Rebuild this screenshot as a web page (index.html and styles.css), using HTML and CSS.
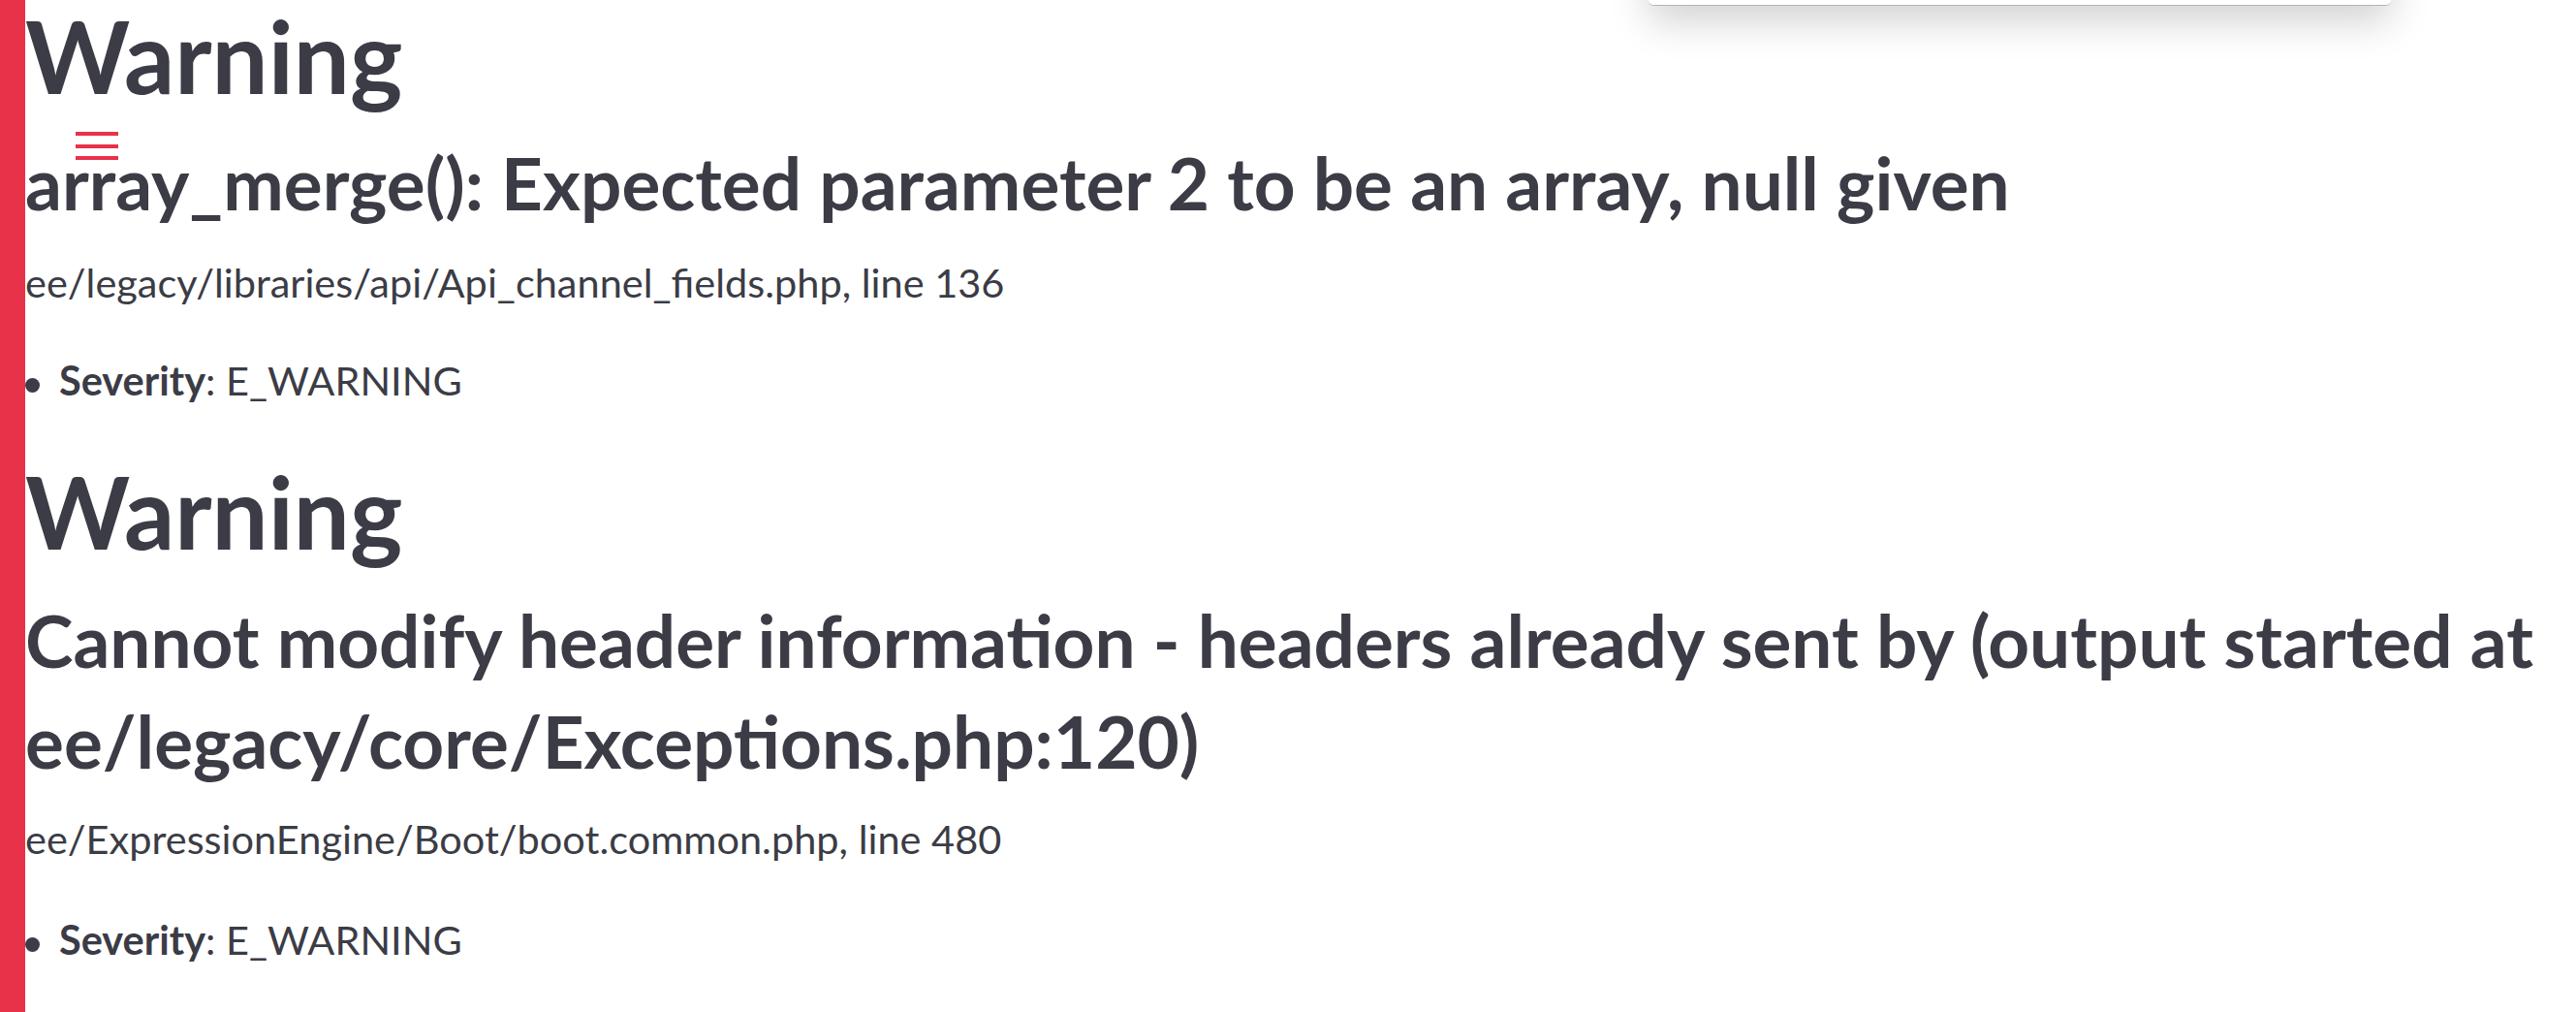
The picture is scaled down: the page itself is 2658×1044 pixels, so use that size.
FILE: index.html
```html
<!DOCTYPE html>
<html lang="en">
<head>
<meta charset="utf-8">
<title>Warning</title>
<link rel="stylesheet" href="styles.css">
</head>
<body>
<div class="menu-panel"></div>
<button class="nav-toggle" aria-label="Menu"><span></span><span></span><span></span></button>
<main class="errors">
  <section class="error">
    <h1 class="error-type">Warning</h1>
    <h2 class="error-msg">array_merge(): Expected parameter 2 to be an array, null given</h2>
    <p class="error-file">ee/legacy/libraries/api/Api_channel_fields.php, line 136</p>
    <ul class="error-meta">
      <li><b>Severity</b>: E_WARNING</li>
    </ul>
  </section>
  <section class="error">
    <h1 class="error-type">Warning</h1>
    <h2 class="error-msg">Cannot modify header information - headers already sent by (output started at ee/legacy/core/Exceptions.php:120)</h2>
    <p class="error-file">ee/ExpressionEngine/Boot/boot.common.php, line 480</p>
    <ul class="error-meta">
      <li><b>Severity</b>: E_WARNING</li>
    </ul>
  </section>
</main>
</body>
</html>
```
FILE: styles.css
```css
html, body {
  margin: 0;
  padding: 0;
  min-height: 100%;
}
body {
  background: #ffffff;
  border-left: 26px solid #e83249;
  color: #3b3c45;
  font-family: Lato, "Open Sans", sans-serif;
  min-height: 1044px;
  box-sizing: border-box;
  overflow: hidden;
}
.errors {
  padding: 0;
}
.error-type {
  margin: 0 0 22px;
  font-size: 103px;
  line-height: 114px;
  font-weight: 700;
}
.error + .error .error-type {
  margin-bottom: 24px;
}
.error-msg {
  margin: 0 0 21px;
  font-size: 74.7px;
  line-height: 104px;
  font-weight: 700;
}
.error + .error .error-msg {
  margin-bottom: 19px;
}
.error-file {
  margin: 0 0 41px;
  font-size: 41.5px;
  line-height: 60px;
  font-weight: 400;
}
.error + .error .error-file {
  margin-bottom: 44px;
}
.error-meta {
  list-style: none;
  margin: 0 0 48px;
  padding: 0;
  font-size: 41.5px;
  line-height: 60px;
}
.error-meta li::before {
  content: "";
  display: inline-block;
  width: 15px;
  height: 15px;
  border-radius: 50%;
  background: #3b3c45;
  margin-right: 20px;
  vertical-align: 3px;
}
.error-meta b {
  font-weight: 700;
}
.nav-toggle {
  position: absolute;
  left: 78px;
  top: 136px;
  width: 44px;
  height: 29px;
  padding: 0;
  border: 0;
  background: transparent;
  display: flex;
  flex-direction: column;
  justify-content: space-between;
}
.nav-toggle span {
  display: block;
  height: 4px;
  background: #e83249;
}
.menu-panel {
  position: absolute;
  left: 1701px;
  top: -200px;
  width: 766px;
  height: 206px;
  background: #fff;
  border-radius: 5px;
  border-bottom: 1px solid #b5b5b5;
  box-shadow: 0 16px 40px rgba(0, 0, 0, 0.18);
  box-sizing: border-box;
  z-index: 2;
}
```
